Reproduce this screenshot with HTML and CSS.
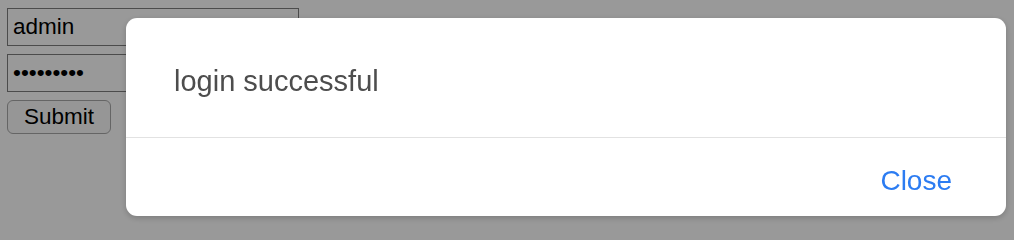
FILE: index.html
```html
<!DOCTYPE html>
<html>
<head>
<meta charset="utf-8">
<link rel="stylesheet" href="styles.css">
</head>
<body>
<form class="login">
  <input class="field" type="text" value="admin">
  <input class="field" type="password" value="password1">
  <button class="submit" type="button">Submit</button>
</form>
<div class="overlay"></div>
<div class="dialog">
  <div class="dialog-body">login successful</div>
  <div class="dialog-footer"><span class="close">Close</span></div>
</div>
</body>
</html>
```
FILE: styles.css
```css
html, body {
  margin: 0;
  padding: 0;
  width: 1014px;
  height: 236px;
  overflow: hidden;
  background: #fff;
  font-family: "Liberation Sans", Arial, sans-serif;
}
.login {
  display: flex;
  flex-direction: column;
  align-items: flex-start;
  gap: 8px;
  padding: 8px 0 0 7px;
}
.field {
  box-sizing: border-box;
  width: 292px;
  height: 38px;
  margin: 0;
  padding: 0 5px;
  border: 1px solid #7d7d7d;
  background: #fff;
  font-family: "Liberation Sans", Arial, sans-serif;
  font-size: 22.5px;
  color: #000;
}
.submit {
  box-sizing: border-box;
  width: 104px;
  height: 34px;
  margin: 0;
  padding: 0;
  border: 1px solid #a8a8a8;
  border-radius: 6px;
  background: #fbfbfb;
  font-family: "Liberation Sans", Arial, sans-serif;
  font-size: 22.5px;
  color: #000;
}
.overlay {
  position: fixed;
  inset: 0;
  background: rgba(0, 0, 0, 0.4);
}
.dialog {
  position: fixed;
  left: 126px;
  top: 18px;
  width: 880px;
  height: 198px;
  background: #fff;
  border-radius: 11px;
  box-shadow: 0 2px 6px rgba(0, 0, 0, 0.2);
  display: flex;
  flex-direction: column;
  overflow: hidden;
}
.dialog-body {
  box-sizing: border-box;
  height: 120px;
  padding: 46px 0 0 48px;
  font-size: 29px;
  line-height: 34px;
  color: #4d4d4d;
  border-bottom: 1.5px solid #e2e2e2;
}
.dialog-footer {
  flex: 1;
  display: flex;
  align-items: center;
  justify-content: flex-end;
  padding: 7px 54px 0 0;
}
.close {
  font-size: 28px;
  color: #2c7cf2;
}
```
